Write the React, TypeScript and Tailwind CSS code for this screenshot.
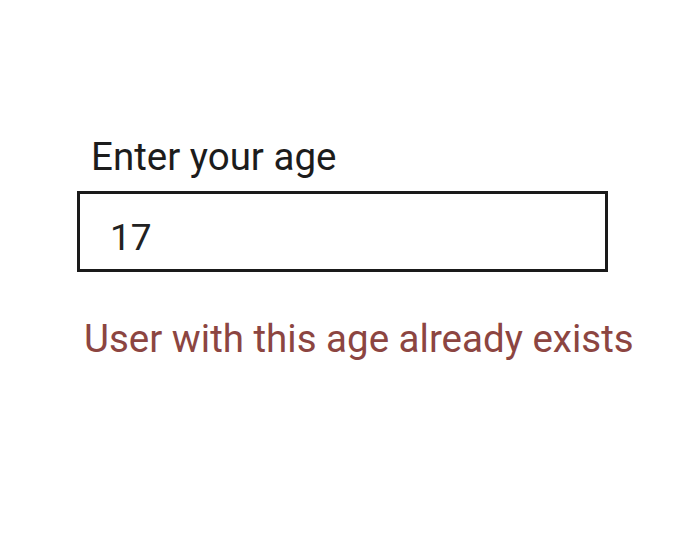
export default function App() {
  return (
    <div className="min-h-screen w-[700px] bg-white font-['Roboto',sans-serif]">
      <div className="pt-[135px] pl-[77px] w-[608px]">
        <label htmlFor="age" className="block pl-[14px] text-[38.5px] leading-[44px] text-[#1c1c1c]">
          Enter your age
        </label>
        <input
          id="age"
          readOnly
          value="17"
          className="mt-[12px] block box-border h-[81px] w-[531px] border-[3px] border-[#1a1a1a] bg-white pl-[30px] pt-[12px] text-[37px] leading-[44px] text-[#222] outline-none"
        />
        <p className="mt-[45px] pl-[7px] text-[38.5px] leading-[44px] whitespace-nowrap text-[#8c4541]">
          User with this age already exists
        </p>
      </div>
    </div>
  );
}
